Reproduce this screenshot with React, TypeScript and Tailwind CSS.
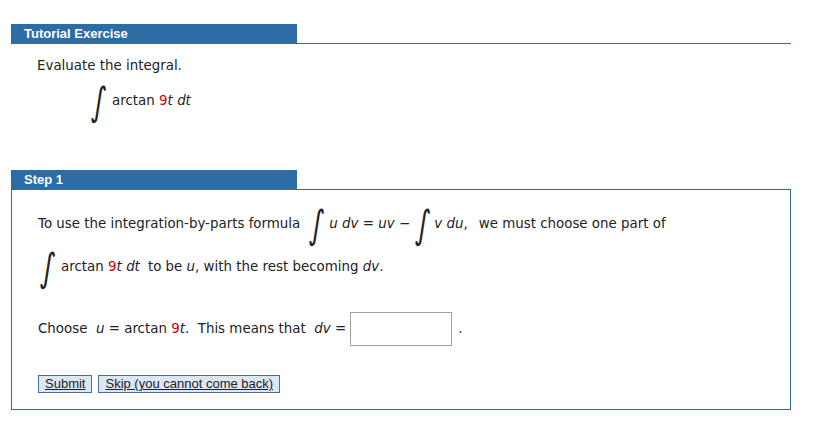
import React from "react";

const Int = ({ className = "" }: { className?: string }) => (
  <span
    className={`inline-block origin-center scale-y-[1.45] -skew-x-[10deg] font-['DejaVu_Sans',sans-serif] text-[27px] leading-none text-[#222] ${className}`}
  >
    ∫
  </span>
);

const Red = ({ children }: { children: React.ReactNode }) => (
  <span className="text-[#cc0000]">{children}</span>
);

const SectionBar = ({ title }: { title: string }) => (
  <div className="flex items-end">
    <div className="w-[286px] h-[20px] bg-[#2e6ca6] pl-[13px] font-['Liberation_Sans',Arial,sans-serif] text-[13px] font-bold leading-[20px] text-white">
      {title}
    </div>
    <div className="flex-1 border-b border-[#336a96]" />
  </div>
);

export default function App() {
  return (
    <div className="w-[817px] h-[435px] bg-white pl-[11px] pt-[24px] font-['DejaVu_Sans',Verdana,sans-serif] text-[13.4px] text-[#222]">
      <div className="w-[780px]">
        <SectionBar title="Tutorial Exercise" />
        <div className="pl-[26px] pt-[14px]">
          <p className="leading-[16px]">Evaluate the integral.</p>
          <div className="flex items-center pl-[55px] mt-[9px] h-[36px]">
            <Int />
            <span className="ml-[6px]">
              arctan <Red>9</Red>
              <i>t</i> <i>dt</i>
            </span>
          </div>
        </div>

        <div className="mt-[51px]">
          <SectionBar title="Step 1" />
          <div className="border-x border-b border-[#336a96] pl-[26px] pt-[15px] pb-[16px] h-[220px]">
            <div className="flex items-center h-[38px]">
              <span>To use the integration-by-parts formula</span>
              <Int className="ml-[10px]" />
              <span className="ml-[5px]">
                <i>u dv</i> = <i>uv</i> −
              </span>
              <Int className="ml-[6px]" />
              <span className="ml-[4px]">
                <i>v du</i>,
              </span>
              <span className="ml-[11px]">we must choose one part of</span>
            </div>
            <div className="flex items-center h-[38px] mt-[5px]">
              <Int className="ml-[3px]" />
              <span className="ml-[6px]">
                arctan <Red>9</Red>
                <i>t</i> <i>dt</i>
              </span>
              <span className="ml-[8px]">
                to be <i>u</i>, with the rest becoming <i>dv</i>.
              </span>
            </div>
            <div className="flex items-center h-[36px] mt-[25px]">
              <span>
                Choose&nbsp; <i>u</i> = arctan <Red>9</Red>
                <i>t</i>.&nbsp; This means that&nbsp; <i>dv</i> =
              </span>
              <input
                type="text"
                className="ml-[4px] w-[102px] h-[34px] border border-[#a0a0a0] bg-white outline-none"
              />
              <span className="ml-[6px]">.</span>
            </div>
            <div className="flex gap-[6px] mt-[28px] font-['Liberation_Sans',Arial,sans-serif] text-[13px]">
              <button className="h-[18px] px-[6px] border border-[#4c6f98] bg-[#dce7f3] leading-[16px] text-[#222] underline">
                Submit
              </button>
              <button className="h-[18px] px-[6px] border border-[#4c6f98] bg-[#dce7f3] leading-[16px] text-[#222] underline">
                Skip (you cannot come back)
              </button>
            </div>
          </div>
        </div>
      </div>
    </div>
  );
}
